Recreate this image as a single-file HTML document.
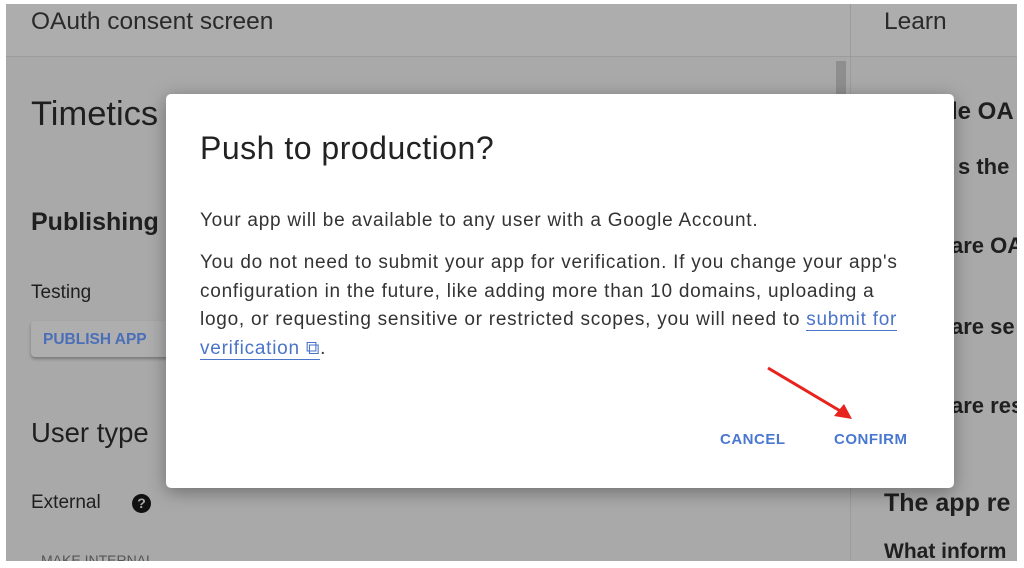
<!DOCTYPE html>
<html><head><meta charset="utf-8"><style>
*{margin:0;padding:0;box-sizing:border-box}
body{width:1024px;height:568px;background:#fff;position:relative;overflow:hidden;font-family:"Liberation Sans",Arial,sans-serif}
.bg{position:absolute;left:6px;top:4px;width:1011px;height:557px;background:#a9a9a9;overflow:hidden}
.hdr{position:absolute;left:0;top:0;width:1011px;height:53px;background:#adadad;border-bottom:1px solid #9c9c9c}
.t{position:absolute;color:#1f1f1f;white-space:nowrap}
.vd{position:absolute;left:844px;top:0;width:1px;height:557px;background:#9c9c9c}
.sb{position:absolute;left:830px;top:57px;width:10px;height:38px;background:#8e8e8e}
.dlg{position:absolute;left:166px;top:94px;width:788px;height:394px;background:#fff;border-radius:5px;box-shadow:0 4px 18px rgba(0,0,0,.35)}
.d{position:absolute;white-space:nowrap;color:#333;font-size:19px;letter-spacing:0.75px}
a{color:#4a74c9;text-decoration:none;border-bottom:1.5px solid #4a74c9}
.btn{position:absolute;color:#4a78d0;font-weight:bold;font-size:15px;letter-spacing:.5px}
</style></head><body>
<div class="bg">
 <div class="hdr"></div>
 <div class="t" style="left:25px;top:4px;font-size:24.5px;color:#2a2a2a">OAuth consent screen</div>
 <div class="t" style="left:878px;top:4px;font-size:24.5px;color:#2a2a2a">Learn</div>
 <div class="vd"></div><div class="sb"></div>
 <div class="t" style="left:25px;top:91px;font-size:34.5px">Timetics</div>
 <div class="t" style="left:25px;top:204px;font-size:25px;font-weight:bold">Publishing</div>
 <div class="t" style="left:25px;top:278px;font-size:19px">Testing</div>
 <div style="position:absolute;left:25px;top:317px;width:140px;height:36px;background:#aeaeae;border-radius:4px;box-shadow:0 2px 3px rgba(0,0,0,.3)"></div>
 <div class="t" style="left:37px;top:327px;font-size:15.5px;font-weight:bold;color:#4a6fb8">PUBLISH APP</div>
 <div class="t" style="left:25px;top:413px;font-size:27.5px">User type</div>
 <div class="t" style="left:25px;top:488px;font-size:19px">External</div>
 <div style="position:absolute;left:126px;top:490px;width:19px;height:19px;border-radius:50%;background:#111;color:#aaa;font-size:14px;font-weight:bold;text-align:center;line-height:19px">?</div>
 <div class="t" style="left:35px;top:548px;font-size:14px;color:#555">MAKE INTERNAL</div>
 <div class="t" style="left:945px;top:94px;font-size:24px;font-weight:bold">le OA</div>
 <div class="t" style="left:952px;top:150px;font-size:22px;font-weight:bold">s the</div>
 <div class="t" style="left:945px;top:229px;font-size:22px;font-weight:bold">are OA</div>
 <div class="t" style="left:945px;top:310px;font-size:22px;font-weight:bold">are se</div>
 <div class="t" style="left:945px;top:389px;font-size:22px;font-weight:bold">are res</div>
 <div class="t" style="left:878px;top:485px;font-size:25px;font-weight:bold">The app re</div>
 <div class="t" style="left:878px;top:536px;font-size:21px;font-weight:bold">What inform</div>
</div>
<div class="dlg">
 <div class="d" style="left:34px;top:36px;font-size:32px;letter-spacing:0.5px;color:#222">Push to production?</div>
 <div class="d" style="left:34px;top:116px">Your app will be available to any user with a Google Account.</div>
 <div class="d" style="left:34px;top:155px;line-height:28.5px">You do not need to submit your app for verification. If you change your app's<br>configuration in the future, like adding more than 10 domains, uploading a<br>logo, or requesting sensitive or restricted scopes, you will need to <a>submit for</a><br><a>verification ⧉</a>.</div>
 <div class="btn" style="left:554px;top:337px">CANCEL</div>
 <div class="btn" style="left:668px;top:337px">CONFIRM</div>
 <svg style="position:absolute;left:596px;top:270px" width="100" height="60"><line x1="6" y1="4" x2="80" y2="48" stroke="#e8221c" stroke-width="3"/><polygon points="90,55 72,52 82,40" fill="#e8221c"/></svg>
</div>
</body></html>
